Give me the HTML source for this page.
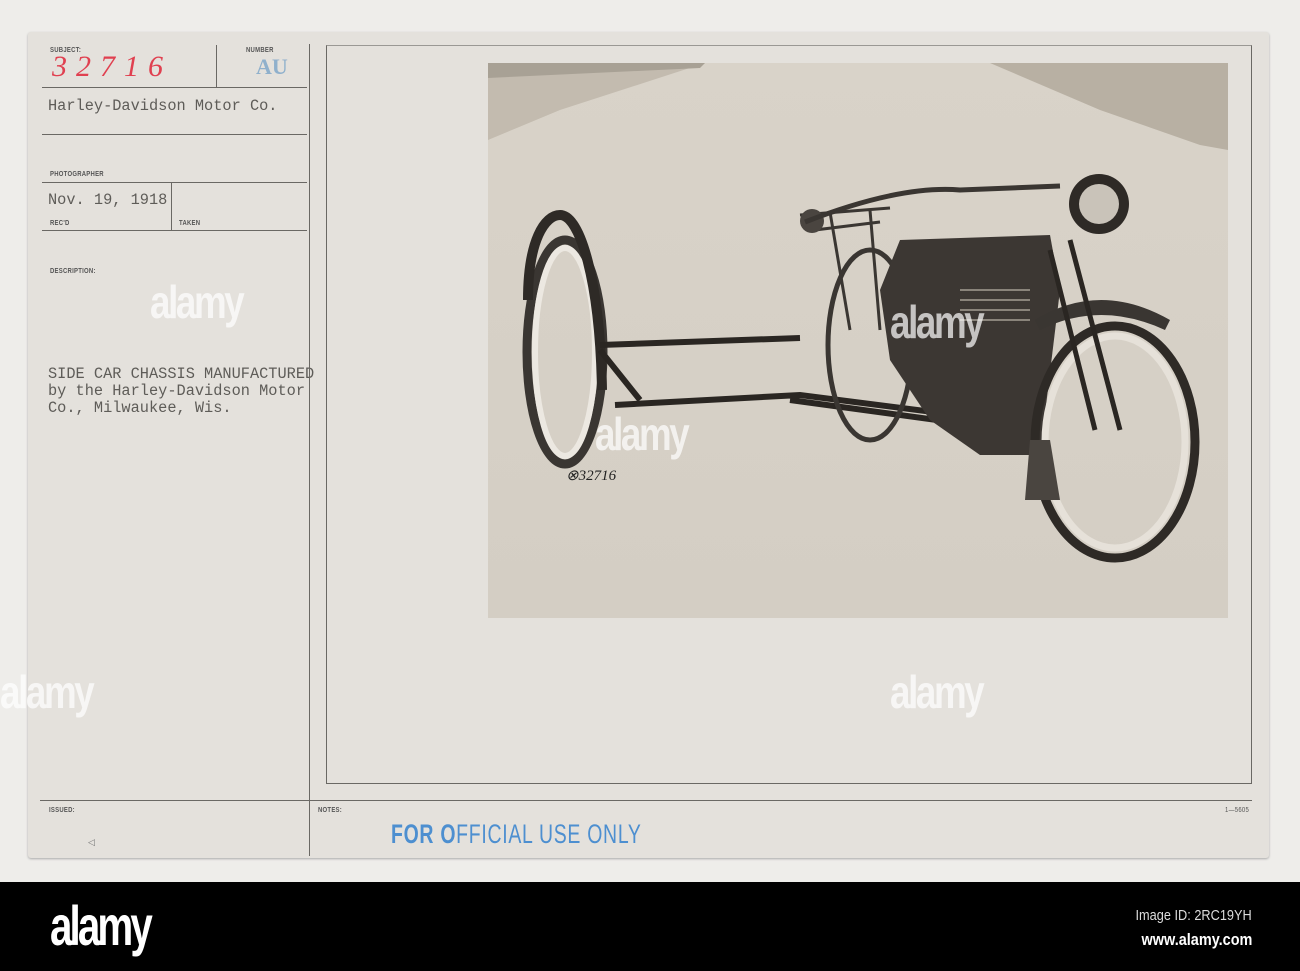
<!DOCTYPE html>
<html><head><meta charset="utf-8"><style>
body{margin:0;width:1300px;height:971px;background:#eeedea;position:relative;overflow:hidden;font-family:"Liberation Sans",sans-serif}
.card{position:absolute;left:28px;top:32px;width:1241px;height:826px;background:#e4e1dc;border-radius:3px;box-shadow:0 1px 2px #aaa}
.t{position:absolute;font-family:"Liberation Mono",monospace;color:#5e5c58;font-size:15.3px;white-space:pre;line-height:17px}
.l{position:absolute;font-size:7px;color:#555;letter-spacing:.3px;font-weight:bold;transform:scaleX(.85);transform-origin:left}
.h{position:absolute;height:1px;background:#6a6864}
.v{position:absolute;width:1px;background:#6a6864}
.bar{position:absolute;left:0;top:882px;width:1300px;height:89px;background:#000}
.wm{position:absolute;color:rgba(255,255,255,.7);font-weight:bold;font-size:46px;letter-spacing:-3px;transform:scaleX(.8);transform-origin:left}
</style></head><body>
<div class="card"></div>
<div class="l" style="left:50px;top:47px">SUBJECT:</div>
<div class="l" style="left:246px;top:47px">NUMBER</div>
<div style="position:absolute;left:52px;top:50px;font-family:'Liberation Serif',serif;font-style:italic;color:#e04050;font-size:30px;letter-spacing:9px">32716</div>
<div style="position:absolute;left:256px;top:54px;font-family:'Liberation Serif',serif;color:#8fb0cc;font-size:22px;font-weight:bold">AU</div>
<div class="v" style="left:216px;top:45px;height:42px"></div>
<div class="h" style="left:42px;top:87px;width:265px"></div>
<div class="t" style="left:48px;top:98px">Harley-Davidson Motor Co.</div>
<div class="h" style="left:42px;top:134px;width:265px"></div>
<div class="l" style="left:50px;top:171px">PHOTOGRAPHER</div>
<div class="h" style="left:42px;top:182px;width:265px"></div>
<div class="t" style="left:48px;top:192px">Nov. 19, 1918</div>
<div class="v" style="left:171px;top:183px;height:47px"></div>
<div class="l" style="left:50px;top:220px">REC'D</div>
<div class="l" style="left:179px;top:220px">TAKEN</div>
<div class="h" style="left:42px;top:230px;width:265px"></div>
<div class="l" style="left:50px;top:268px">DESCRIPTION:</div>
<div class="t" style="left:48px;top:366px">SIDE CAR CHASSIS MANUFACTURED
by the Harley-Davidson Motor
Co., Milwaukee, Wis.</div>
<div class="v" style="left:309px;top:44px;height:812px"></div>
<div style="position:absolute;left:326px;top:45px;width:924px;height:737px;border:1px solid #6a6864;border-top-color:#9a9894"></div>
<div class="h" style="left:40px;top:800px;width:1212px"></div>
<div class="l" style="left:49px;top:807px">ISSUED:</div>
<div class="l" style="left:318px;top:807px">NOTES:</div>
<div class="l" style="left:1225px;top:807px;font-weight:normal">1—5605</div>
<div style="position:absolute;left:88px;top:837px;color:#777;font-size:9px">◁</div>
<div style="position:absolute;left:391px;top:819px;color:#4d8fd0;font-size:27px;font-family:'Liberation Sans Narrow','Liberation Sans',sans-serif;transform:scaleX(.72);transform-origin:left;letter-spacing:1px;white-space:nowrap"><b>FOR O</b>FFICIAL USE ONLY</div>

<svg style="position:absolute;left:0;top:0" width="1300" height="971">
<defs><linearGradient id="g" x1="0" y1="0" x2="0" y2="1"><stop offset="0" stop-color="#d9d3c9"/><stop offset="1" stop-color="#d4cec4"/></linearGradient></defs>
<rect x="488" y="63" width="740" height="555" fill="url(#g)"/>
<polygon points="488,63 705,63 560,110 488,140" fill="#c3bbaf"/>
<polygon points="488,63 705,63 700,68 488,78" fill="#a8a195"/>
<polygon points="990,63 1228,63 1228,150 1200,145 1100,110" fill="#b8b0a3"/>
<ellipse cx="565" cy="352" rx="38" ry="112" fill="none" stroke="#3a3632" stroke-width="9"/>
<ellipse cx="565" cy="352" rx="30" ry="104" fill="none" stroke="#ece8e1" stroke-width="6"/>
<path d="M528,300 C528,240 545,215 560,215 C580,215 600,280 602,390" fill="none" stroke="#2e2a26" stroke-width="10"/>
<path d="M600,345 L800,338 M615,405 L800,395 L980,418 M600,350 L640,400 M790,400 L1010,430" stroke="#2a2622" stroke-width="6" fill="none"/>
<ellipse cx="870" cy="345" rx="42" ry="95" fill="none" stroke="#3a3632" stroke-width="5"/>
<path d="M900,240 L1050,235 L1060,290 L1040,455 L980,455 L930,420 L890,360 L880,290 Z" fill="#3c3733"/>
<path d="M960,290 L1030,290 M960,300 L1030,300 M960,310 L1030,310 M960,320 L1030,320" stroke="#8a847b" stroke-width="2"/>
<path d="M800,215 L890,208 M815,230 L880,222 M830,212 L850,330 M870,210 L880,330" stroke="#3a3632" stroke-width="3" fill="none"/>
<circle cx="812" cy="221" r="12" fill="#4a4540"/>
<path d="M805,222 Q900,185 960,190 L1060,186" stroke="#3a3632" stroke-width="5" fill="none"/>
<ellipse cx="1115" cy="442" rx="80" ry="116" fill="none" stroke="#2e2a26" stroke-width="9"/>
<ellipse cx="1115" cy="442" rx="70" ry="106" fill="none" stroke="#e6e1d9" stroke-width="7"/>
<path d="M1035,320 Q1100,280 1170,320 L1165,330 Q1100,300 1040,330Z" fill="#3a3632"/>
<path d="M1050,250 L1095,430 M1070,240 L1120,430" stroke="#2a2622" stroke-width="5"/>
<path d="M1030,440 L1050,440 L1060,500 L1025,500Z" fill="#4a4540"/>
<circle cx="1099" cy="204" r="30" fill="#2e2a26"/>
<circle cx="1099" cy="204" r="20" fill="#c9c3b9"/>
<text x="566" y="480" font-family="Liberation Serif,serif" font-style="italic" font-size="15" fill="#222">⊗32716</text>
</svg>
<div class="wm" style="left:150px;top:275px">alamy</div>
<div class="wm" style="left:595px;top:407px">alamy</div>
<div class="wm" style="left:890px;top:295px">alamy</div>
<div class="wm" style="left:0px;top:665px">alamy</div>
<div class="wm" style="left:890px;top:665px">alamy</div>
<div class="bar"></div>
<div style="position:absolute;left:50px;top:893px;color:#fff;font-weight:bold;font-size:56px;letter-spacing:-4px;transform:scaleX(.72);transform-origin:left">alamy</div>
<div style="position:absolute;right:48px;top:907px;color:#ddd;font-size:15px;transform:scaleX(.85);transform-origin:right">Image ID: 2RC19YH</div>
<div style="position:absolute;right:48px;top:930px;color:#fff;font-size:17px;font-weight:bold;transform:scaleX(.85);transform-origin:right">www.alamy.com</div>
</body></html>
